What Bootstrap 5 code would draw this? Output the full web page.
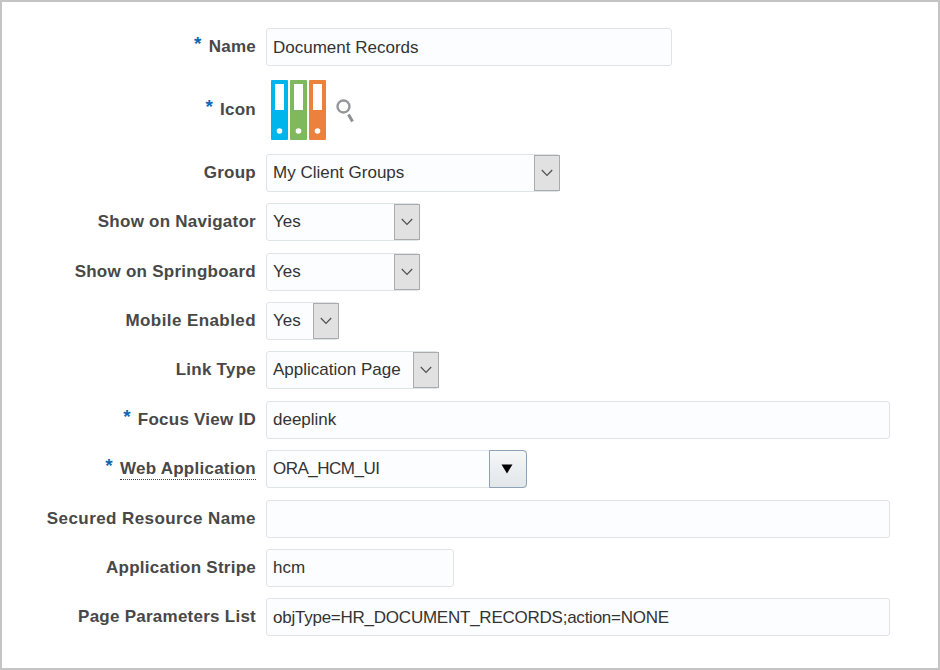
<!DOCTYPE html>
<html lang="en">
<head>
<meta charset="utf-8">
<meta name="viewport" content="width=device-width, initial-scale=1">
<title>Document Records</title>
<link href="https://cdn.jsdelivr.net/npm/bootstrap@5.3.0/dist/css/bootstrap.min.css" rel="stylesheet">
<style>
body{font-family:"Liberation Sans",Arial,sans-serif;font-size:17px;line-height:20px;color:#333;background:#fff}
.page-frame{height:670px;border:2px solid #c4c4c4;padding-top:20.6px;overflow:hidden}
.field-row{height:49.35px}
.icon-row{height:76.5px}
.field-label{width:254px;color:#484848;letter-spacing:.25px;white-space:nowrap}
.field-label.wide{letter-spacing:.42px}
.req{color:#0f68b4;font-size:19px;margin-right:7px;line-height:16px;transform:translateY(-1.5px)}
.hint{border-bottom:1px dotted #444;line-height:20px}
.box{height:38px;margin-left:10px;background:#fcfdff;border:1px solid #dfe4e7;border-radius:3px;padding-left:6px;white-space:nowrap}
.entry{padding-top:1.2px}
.w-name{width:406px}.w-group{width:294px}.w-yes{width:154px}.w-mobile{width:73px}.w-link{width:173px}
.w-full{width:624px}.w-app{width:261px}.w-stripe{width:188px}
.drop{width:26px;height:36px;margin-right:-1px;background:#e1e1e1;border:1px solid #a9abac}
.combo{width:38px;height:38px;margin-right:-1px;border:1.5px solid #8ea2b7;border-radius:0 4px 4px 0;background:linear-gradient(#f5f7f8,#e2e6e9)}
.combo svg{margin-right:2px}
.tight{letter-spacing:-.5px}.snug{letter-spacing:-.24px}
.binders{margin:0 0 1px 15px}
</style>
<script src="https://cdn.jsdelivr.net/npm/bootstrap@5.3.0/dist/js/bootstrap.bundle.min.js"></script>
</head>
<body>
<svg class="d-none"><symbol id="chev" viewBox="0 0 12 8"><path d="M.8 1 6 6.3 11.2 1" fill="none" stroke="#505050" stroke-width="1.2"/></symbol></svg>
<main class="page-frame">
<div class="field-row d-flex align-items-center"><div class="field-label d-flex justify-content-end fw-bold"><span class="req">*</span><span>Name</span></div><div class="box entry w-name d-flex align-items-center">Document Records</div></div>
<div class="icon-row d-flex align-items-center"><div class="field-label d-flex justify-content-end fw-bold"><span class="req">*</span><span>Icon</span></div>
<svg class="binders" width="86" height="62" viewBox="0 0 86 62">
<rect x="0" y="1" width="17" height="60" rx="1" fill="#00b5ec"/><rect x="19" y="1" width="17" height="60" rx="1" fill="#7fb95e"/><rect x="38" y="1" width="17" height="60" rx="1" fill="#ec803d"/>
<g fill="#fff"><path d="M4 5h9v26H4zM23 5h9v26h-9zM42 5h9v26h-9z"/><circle cx="8.5" cy="52" r="2.8"/><circle cx="27.5" cy="52" r="2.8"/><circle cx="46.5" cy="52" r="2.8"/></g>
<circle cx="72.5" cy="27.5" r="6" fill="none" stroke="#939799" stroke-width="2.4"/><path d="m77.5 35.5 4 7" stroke="#8d9193" stroke-width="3"/>
</svg></div>
<div class="field-row d-flex align-items-center"><div class="field-label text-end fw-bold">Group</div><div class="box w-group d-flex align-items-center justify-content-between">My Client Groups<span class="drop d-flex align-items-center justify-content-center"><svg width="12" height="8"><use href="#chev"/></svg></span></div></div>
<div class="field-row d-flex align-items-center"><div class="field-label text-end fw-bold">Show on Navigator</div><div class="box w-yes d-flex align-items-center justify-content-between">Yes<span class="drop d-flex align-items-center justify-content-center"><svg width="12" height="8"><use href="#chev"/></svg></span></div></div>
<div class="field-row d-flex align-items-center"><div class="field-label text-end fw-bold">Show on Springboard</div><div class="box w-yes d-flex align-items-center justify-content-between">Yes<span class="drop d-flex align-items-center justify-content-center"><svg width="12" height="8"><use href="#chev"/></svg></span></div></div>
<div class="field-row d-flex align-items-center"><div class="field-label wide text-end fw-bold">Mobile Enabled</div><div class="box w-mobile d-flex align-items-center justify-content-between">Yes<span class="drop d-flex align-items-center justify-content-center"><svg width="12" height="8"><use href="#chev"/></svg></span></div></div>
<div class="field-row d-flex align-items-center"><div class="field-label text-end fw-bold">Link Type</div><div class="box w-link d-flex align-items-center justify-content-between">Application Page<span class="drop d-flex align-items-center justify-content-center"><svg width="12" height="8"><use href="#chev"/></svg></span></div></div>
<div class="field-row d-flex align-items-center"><div class="field-label d-flex justify-content-end fw-bold"><span class="req">*</span><span>Focus View ID</span></div><div class="box entry w-full d-flex align-items-center">deeplink</div></div>
<div class="field-row d-flex align-items-center"><div class="field-label d-flex justify-content-end fw-bold"><span class="req">*</span><span class="hint">Web Application</span></div><div class="box w-app d-flex align-items-center justify-content-between"><span class="tight">ORA_HCM_UI</span><span class="combo d-flex align-items-center justify-content-center"><svg width="12" height="10"><path d="M.5.5h11L6 9.5z" fill="#000"/></svg></span></div></div>
<div class="field-row d-flex align-items-center"><div class="field-label wide text-end fw-bold">Secured Resource Name</div><div class="box w-full"></div></div>
<div class="field-row d-flex align-items-center"><div class="field-label text-end fw-bold">Application Stripe</div><div class="box entry w-stripe d-flex align-items-center">hcm</div></div>
<div class="field-row d-flex align-items-center"><div class="field-label text-end fw-bold">Page Parameters List</div><div class="box entry w-full d-flex align-items-center"><span class="snug">objType=HR_DOCUMENT_RECORDS;action=NONE</span></div></div>
</main>
</body>
</html>
